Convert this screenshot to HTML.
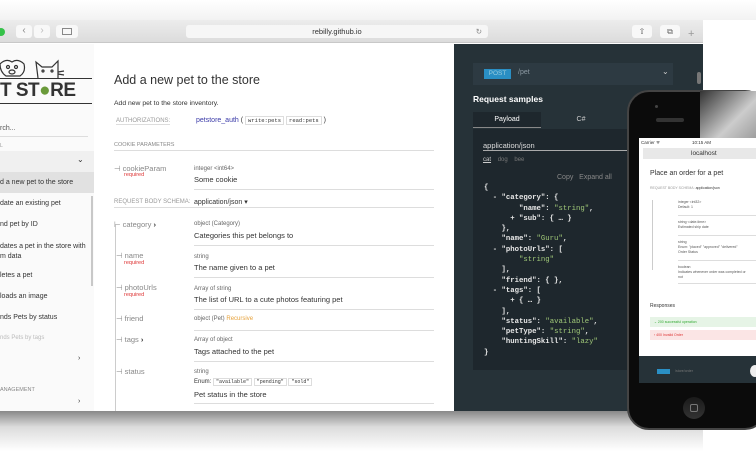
<!DOCTYPE html><html><head><style>
*{margin:0;padding:0;box-sizing:border-box}
body{width:756px;height:462px;overflow:hidden;background:#fff;font-family:"Liberation Sans",sans-serif;position:relative}
.a{position:absolute}
.mono{font-family:"Liberation Mono",monospace}
.sb{font-size:7px;color:#333}
.lab{font-size:7.5px;color:#888}
.req{font-size:5.5px;color:#d33}
.typ{font-size:6px;color:#666}
.desc{font-size:7.5px;color:#333}
.hr{height:1px;background:#ddd}
.code{font-size:7.3px;color:#e8e8e8;line-height:10.3px;white-space:pre;font-weight:bold}
.g{color:#a0c878;font-weight:normal}
</style></head><body>
<div class="a" style="left:0;top:0;width:756px;height:20px;background:linear-gradient(#fff,#f2f2f2)"></div>
<div class="a" style="left:0;top:20px;width:703px;height:23px;background:linear-gradient(#ececec,#dcdcdc);border-bottom:1px solid #c8c8c8"></div>
<div class="a" style="left:-3px;top:28px;width:8px;height:8px;border-radius:50%;background:#35c249"></div>
<div class="a" style="left:16px;top:25px;width:16px;height:13px;background:#f8f8f8;border-radius:3px;font-size:10px;color:#888;text-align:center;line-height:12px">‹</div>
<div class="a" style="left:34px;top:25px;width:16px;height:13px;background:#f8f8f8;border-radius:3px;font-size:10px;color:#bbb;text-align:center;line-height:12px">›</div>
<div class="a" style="left:56px;top:25px;width:22px;height:13px;background:#f8f8f8;border-radius:3px"><div class="a" style="left:6px;top:3px;width:10px;height:7px;border:1px solid #888"></div></div>
<div class="a" style="left:186px;top:25px;width:302px;height:13px;background:#f6f6f6;border-radius:3px;font-size:7.5px;color:#333;text-align:center;line-height:13px">rebilly.github.io<span style="position:absolute;right:6px;color:#888">↻</span></div>
<div class="a" style="left:632px;top:25px;width:20px;height:13px;background:#f8f8f8;border-radius:3px;font-size:8px;color:#666;text-align:center;line-height:13px">⇧</div>
<div class="a" style="left:660px;top:25px;width:20px;height:13px;background:#f8f8f8;border-radius:3px;font-size:8px;color:#666;text-align:center;line-height:13px">⧉</div>
<div class="a" style="left:688px;top:28px;font-size:11px;color:#999">+</div>
<!-- sidebar -->
<div class="a" style="left:0;top:44px;width:94px;height:367px;background:#fafafa"></div>
<svg class="a" style="left:0;top:56px" width="70" height="24" fill="none" stroke="#333" stroke-width="1.2">
<path d="M0 8 Q6 2 12 6 Q18 2 24 8 Q26 16 20 20 L6 20 Q0 16 0 8Z"/><circle cx="8" cy="11" r="1.5"/><circle cx="16" cy="11" r="1.5"/><ellipse cx="12" cy="16" rx="3" ry="2"/>
<path d="M38 22 L36 6 L42 11 L52 11 L58 5 L58 22"/><circle cx="43" cy="15" r="1"/><circle cx="52" cy="15" r="1"/><path d="M58 16 L64 15 M58 18 L64 19"/>
</svg>
<div class="a" style="left:0;top:78px;width:92px;height:1px;background:#333"></div>
<div class="a" style="left:0;top:80px;font-size:19px;font-weight:bold;color:#333;letter-spacing:-.5px">T ST<span style="color:#6a9a3a">●</span>RE</div>
<div class="a" style="left:0;top:103px;width:92px;height:1px;background:#333"></div>
<div class="a sb" style="left:0;top:125px;color:#555">rch...</div>
<div class="a" style="left:0;top:136px;width:88px;height:1px;background:#ddd"></div>
<div class="a" style="left:0;top:143px;font-size:5px;color:#999">L</div>
<div class="a" style="left:0;top:151px;width:94px;height:21px;background:#f0f0f0"></div>
<div class="a" style="left:77px;top:155px;font-size:8px;color:#333">⌄</div>
<div class="a" style="left:0;top:172px;width:94px;height:21px;background:#e1e1e1"></div>
<div class="a sb" style="left:0;top:179px">d a new pet to the store</div>
<div class="a sb" style="left:0;top:200px">date an existing pet</div>
<div class="a sb" style="left:0;top:221px">nd pet by ID</div>
<div class="a sb" style="left:0;top:242px;line-height:10px">dates a pet in the store with<br>m data</div>
<div class="a sb" style="left:0;top:272px">letes a pet</div>
<div class="a sb" style="left:0;top:293px">loads an image</div>
<div class="a sb" style="left:0;top:314px">nds Pets by status</div>
<div class="a sb" style="left:0;top:335px;color:#bbb;font-size:6px">nds Pets by tags</div>
<div class="a" style="left:91px;top:196px;width:2px;height:90px;background:#c8c8c8"></div>
<div class="a sb" style="left:78px;top:355px">›</div>
<div class="a" style="left:0;top:387px;font-size:5.5px;color:#888">ANAGEMENT</div>
<div class="a sb" style="left:78px;top:398px">›</div>
<!-- main -->
<div class="a" style="left:114px;top:73px;font-size:12.5px;color:#333">Add a new pet to the store</div>
<div class="a" style="left:114px;top:100px;font-size:6.8px;color:#333">Add new pet to the store inventory.</div>
<div class="a" style="left:116px;top:118px;font-size:6px;color:#999;border-bottom:1px solid #ddd">AUTHORIZATIONS:</div>
<div class="a" style="left:196px;top:117px;font-size:7px;color:#3a3aa8">petstore_auth <span style="color:#333">( <span class="mono" style="font-size:5.5px;border:1px solid #ddd;padding:0 2px">write:pets</span> <span class="mono" style="font-size:5.5px;border:1px solid #ddd;padding:0 2px">read:pets</span> )</span></div>
<div class="a" style="left:114px;top:142px;font-size:5.5px;color:#888">COOKIE PARAMETERS</div>
<div class="a hr" style="left:114px;top:150px;width:320px"></div>
<div class="a lab" style="left:114px;top:164px">⊣ cookieParam</div>
<div class="a req" style="left:124px;top:172px">required</div>
<div class="a typ" style="left:194px;top:166px">integer &lt;int64&gt;</div>
<div class="a desc" style="left:194px;top:175px">Some cookie</div>
<div class="a hr" style="left:194px;top:189px;width:240px"></div>
<div class="a" style="left:114px;top:199px;font-size:6px;color:#999">REQUEST BODY SCHEMA:</div>
<div class="a" style="left:194px;top:198px;font-size:7px;color:#333">application/json ▾</div>
<div class="a hr" style="left:114px;top:207px;width:320px"></div>
<div class="a" style="left:115px;top:225px;width:1px;height:186px;background:#ccc"></div>
<div class="a lab" style="left:114px;top:220px">⊢ category <b style="color:#333">›</b></div>
<div class="a typ" style="left:194px;top:221px">object (Category)</div>
<div class="a desc" style="left:194px;top:231px">Categories this pet belongs to</div>
<div class="a hr" style="left:194px;top:245px;width:240px"></div>
<div class="a lab" style="left:116px;top:251px">⊣ name</div>
<div class="a req" style="left:124px;top:260px">required</div>
<div class="a typ" style="left:194px;top:254px">string</div>
<div class="a desc" style="left:194px;top:263px">The name given to a pet</div>
<div class="a hr" style="left:194px;top:277px;width:240px"></div>
<div class="a lab" style="left:116px;top:283px">⊣ photoUrls</div>
<div class="a req" style="left:124px;top:292px">required</div>
<div class="a typ" style="left:194px;top:286px">Array of string</div>
<div class="a desc" style="left:194px;top:295px">The list of URL to a cute photos featuring pet</div>
<div class="a hr" style="left:194px;top:309px;width:240px"></div>
<div class="a lab" style="left:116px;top:314px">⊣ friend</div>
<div class="a typ" style="left:194px;top:316px">object (Pet) <span style="color:#e6a23c">Recursive</span></div>
<div class="a hr" style="left:194px;top:330px;width:240px"></div>
<div class="a lab" style="left:116px;top:335px">⊣ tags <b style="color:#333">›</b></div>
<div class="a typ" style="left:194px;top:337px">Array of object</div>
<div class="a desc" style="left:194px;top:347px">Tags attached to the pet</div>
<div class="a hr" style="left:194px;top:361px;width:240px"></div>
<div class="a lab" style="left:116px;top:367px">⊣ status</div>
<div class="a typ" style="left:194px;top:369px">string</div>
<div class="a" style="left:194px;top:379px;font-size:6px;color:#333">Enum: <span class="mono" style="font-size:5px;border:1px solid #ddd;padding:0 2px">"available"</span> <span class="mono" style="font-size:5px;border:1px solid #ddd;padding:0 2px">"pending"</span> <span class="mono" style="font-size:5px;border:1px solid #ddd;padding:0 2px">"sold"</span></div>
<div class="a desc" style="left:194px;top:390px">Pet status in the store</div>
<div class="a hr" style="left:194px;top:403px;width:240px"></div>
<!-- right panel -->
<div class="a" style="left:454px;top:44px;width:249px;height:367px;background:#263238"></div>
<div class="a" style="left:697px;top:72px;width:4px;height:12px;background:#777;border-radius:2px"></div>
<div class="a" style="left:473px;top:63px;width:200px;height:22px;background:#2d3a42"></div>
<div class="a" style="left:484px;top:69px;width:27px;height:10px;background:#2a8fc4;font-size:6.5px;color:#9cd;text-align:center;line-height:10px">POST</div>
<div class="a" style="left:518px;top:69px;font-size:7px;color:#8c9aa3">/pet</div>
<div class="a" style="left:662px;top:67px;font-size:8px;color:#ccc">⌄</div>
<div class="a" style="left:473px;top:94px;font-size:8.5px;color:#fff;font-weight:bold">Request samples</div>
<div class="a" style="left:473px;top:112px;width:68px;height:16px;background:#1e272d;font-size:7px;color:#fff;text-align:center;line-height:16px;border-bottom:1px solid #888">Payload</div>
<div class="a" style="left:541px;top:112px;width:80px;height:16px;font-size:7px;color:#ccc;text-align:center;line-height:16px">C#</div>
<div class="a" style="left:473px;top:129px;width:170px;height:241px;background:#1e272d"></div>
<div class="a" style="left:483px;top:141px;font-size:7.5px;color:#ddd;border-bottom:1px solid #aaa;width:145px">application/json</div>
<div class="a" style="left:483px;top:157px;font-size:6px;color:#ccc"><u>cat</u> &nbsp;&nbsp; <span style="color:#777">dog</span> &nbsp;&nbsp; <span style="color:#777">bee</span></div>
<div class="a" style="left:557px;top:174px;font-size:7px;color:#888">Copy &nbsp; Expand all</div>
<div class="a mono code" style="left:484px;top:183px">{
  - "category": {
        "name": <span class="g">"string"</span>,
      + "sub": { … }
    },
    "name": <span class="g">"Guru"</span>,
  - "photoUrls": [
        <span class="g">"string"</span>
    ],
    "friend": { },
  - "tags": [
      + { … }
    ],
    "status": <span class="g">"available"</span>,
    "petType": <span class="g">"string"</span>,
    "huntingSkill": <span class="g">"lazy"</span>
}</div>
<div class="a" style="left:0;top:411px;width:703px;height:40px;background:linear-gradient(#888,#dcdcdc 40%,#fff)"></div>
<!-- phone -->
<div class="a" style="left:627px;top:90px;width:140px;height:340px;background:#0b0b0b;border-radius:22px;border:2px solid #444"></div>
<div class="a" style="left:700px;top:91px;width:60px;height:47px;background:linear-gradient(135deg,#333,#ccc 60%,#999)"></div>
<div class="a" style="left:656px;top:118px;width:28px;height:4px;background:#333;border-radius:2px"></div>
<div class="a" style="left:655px;top:105px;width:3px;height:3px;background:#444;border-radius:50%"></div>
<div class="a" style="left:639px;top:138px;width:117px;height:218px;background:#fff"></div>
<div class="a" style="left:641px;top:140px;font-size:4.5px;color:#333">Carrier ᯤ</div>
<div class="a" style="left:692px;top:140px;font-size:4.5px;color:#333">10:15 AM</div>
<div class="a" style="left:643px;top:148px;width:113px;height:11px;background:#e8e8e8;font-size:6.5px;color:#333;line-height:11px;padding-left:48px">localhost</div>
<div class="a" style="left:650px;top:170px;font-size:7px;color:#333">Place an order for a pet</div>
<div class="a" style="left:650px;top:186px;font-size:3.5px;color:#999">REQUEST BODY SCHEMA: <span style="color:#333">application/json</span></div>
<div class="a" style="left:652px;top:200px;width:1px;height:70px;background:#ccc"></div>
<div class="a" style="left:678px;top:200px;font-size:3.5px;color:#555;line-height:5px">integer &lt;int32&gt;<br>Default: 1</div>
<div class="a" style="left:678px;top:215px;width:80px;height:1px;background:#ddd"></div>
<div class="a" style="left:678px;top:220px;font-size:3.5px;color:#555;line-height:5px">string &lt;date-time&gt;<br>Estimated ship date</div>
<div class="a" style="left:678px;top:235px;width:80px;height:1px;background:#ddd"></div>
<div class="a" style="left:678px;top:240px;font-size:3.5px;color:#555;line-height:5px">string<br>Enum: "placed" "approved" "delivered"<br>Order Status</div>
<div class="a" style="left:678px;top:260px;width:80px;height:1px;background:#ddd"></div>
<div class="a" style="left:678px;top:265px;font-size:3.5px;color:#555;line-height:5px">boolean<br>Indicates whenever order was completed or<br>not</div>
<div class="a" style="left:678px;top:283px;width:80px;height:1px;background:#ddd"></div>
<div class="a" style="left:650px;top:303px;font-size:5px;color:#333">Responses</div>
<div class="a" style="left:650px;top:317px;width:106px;height:10px;background:#e6f4e6;font-size:3.5px;color:#3a3;line-height:10px;padding-left:4px">⌄ 200 successful operation</div>
<div class="a" style="left:650px;top:330px;width:106px;height:10px;background:#fbe5e5;font-size:3.5px;color:#d33;line-height:10px;padding-left:4px">› 400 Invalid Order</div>
<div class="a" style="left:639px;top:356px;width:117px;height:27px;background:#263238"></div>
<div class="a" style="left:657px;top:369px;width:13px;height:5px;background:#2a8fc4"></div>
<div class="a" style="left:675px;top:369px;font-size:3.5px;color:#777">/store/order</div>
<div class="a" style="left:750px;top:365px;width:10px;height:12px;background:#eee;border-radius:50%"></div>
<div class="a" style="left:683px;top:397px;width:22px;height:22px;border-radius:50%;background:linear-gradient(#1a1a1a,#333)"></div>
<div class="a" style="left:690px;top:404px;width:8px;height:8px;border:1px solid #777;border-radius:2px"></div>
</body></html>
